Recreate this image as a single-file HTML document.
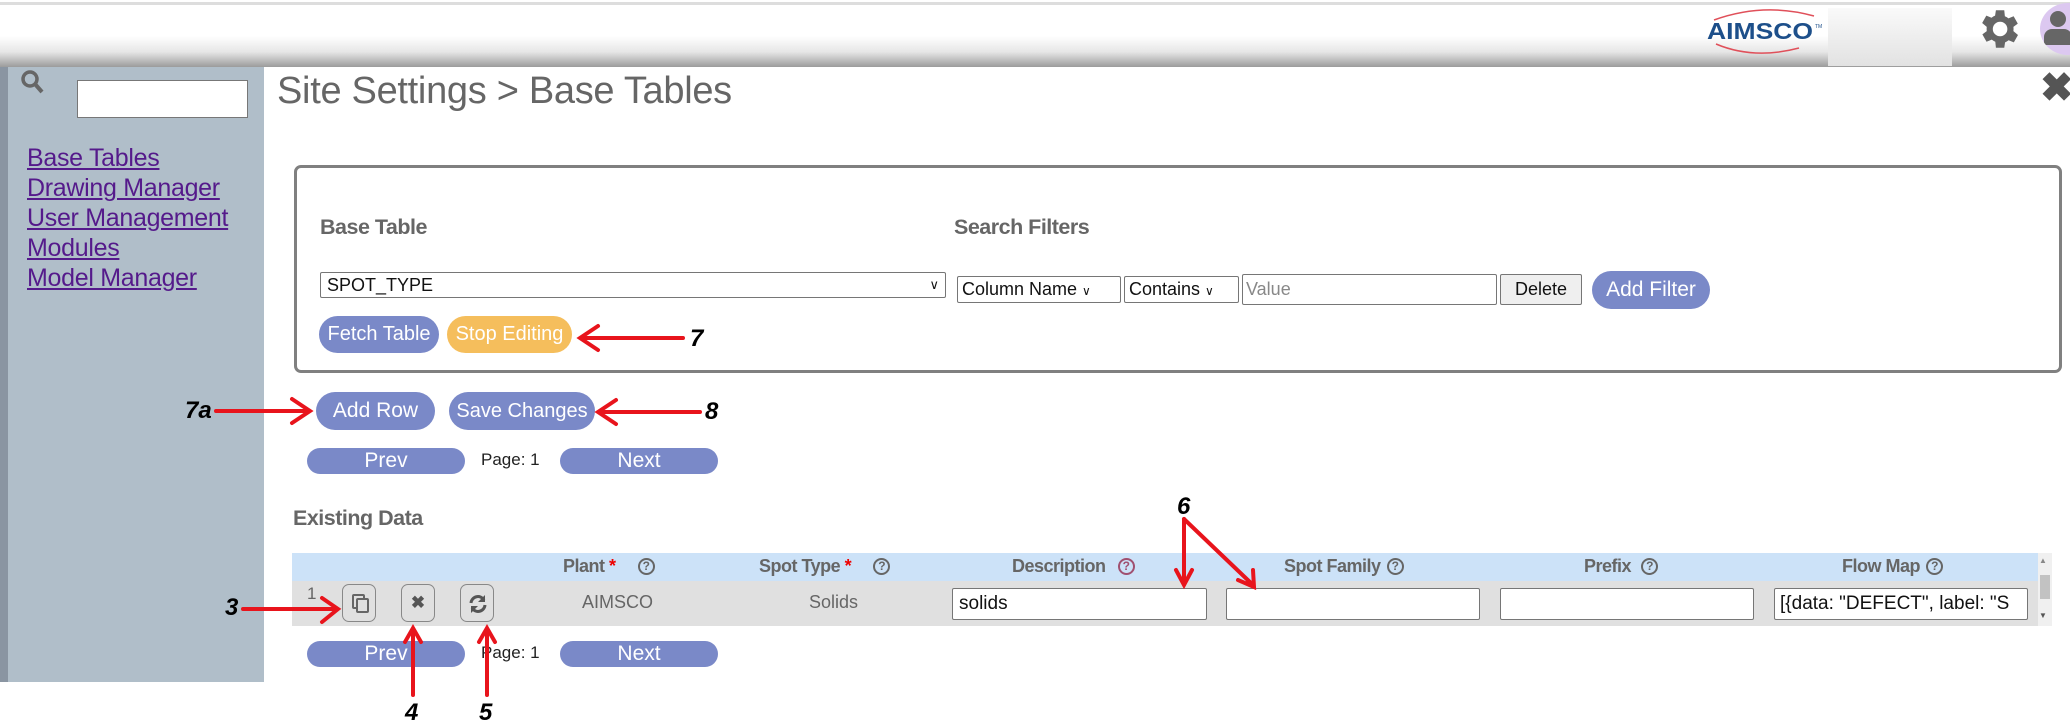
<!DOCTYPE html>
<html><head><meta charset="utf-8"><style>
*{margin:0;padding:0;box-sizing:border-box}
body{width:2070px;height:728px;overflow:hidden;background:#fff;font-family:"Liberation Sans",sans-serif;position:relative}
.a{position:absolute}
.btn{position:absolute;background:#7a89c8;color:#fff;border-radius:20px;font-size:20px;text-align:center;white-space:nowrap}
.lnk{position:absolute;left:27px;color:#551a8b;text-decoration:underline;font-size:25px;letter-spacing:-0.3px}
.lbl{position:absolute;font-weight:bold;color:#666;font-size:21.5px;letter-spacing:-0.5px}
.inp{position:absolute;background:#fff;border:1px solid #767676;border-radius:2px;font-size:19px;color:#111;padding-left:6px;white-space:nowrap;overflow:hidden}
.th{position:absolute;top:556px;font-weight:bold;color:#666;font-size:18px;letter-spacing:-0.5px;white-space:nowrap}
.q{display:inline-block;width:17px;height:17px;border:2px solid #666;border-radius:50%;font-size:12px;line-height:13px;text-align:center;vertical-align:2px;margin-left:6px;color:#666}
.st{color:#e00}
.ib{position:absolute;top:584px;width:34px;height:38px;border:1px solid #888;border-radius:7px}
.rn{position:absolute;font-weight:bold;font-style:italic;font-size:24px;color:#000}
</style></head><body>
<!-- header -->
<div class="a" style="left:0;top:0;width:2070px;height:67px;background:linear-gradient(#fff 0,#fff 36px,#e6e6e6 52px,#9c9c9c 67px)"></div>
<div class="a" style="left:0;top:2px;width:2070px;height:3px;background:#ddd"></div>
<div class="a" style="left:1828px;top:8px;width:124px;height:58px;background:linear-gradient(#fafafa,#e2e2e2)"></div>
<svg class="a" style="left:1704px;top:6px" width="124" height="50" viewBox="0 0 124 50">
<path d="M10 14 Q60 -4 110 10" stroke="#e0505a" stroke-width="1.5" fill="none"/>
<path d="M12 38 Q50 54 95 42" stroke="#e0505a" stroke-width="1.5" fill="none"/>
<text x="3" y="33" font-family="Liberation Sans" font-weight="bold" font-size="23" fill="#1d4f8a" textLength="106" lengthAdjust="spacingAndGlyphs">AIMSCO</text>
<text x="111" y="22" font-size="5" fill="#1d4f8a">TM</text></svg>
<svg class="a" style="left:1972px;top:4px" width="52" height="50" viewBox="0 0 24 24"><path fill="#666" d="M19.4 13a7.5 7.5 0 000-2l2.1-1.6-2-3.5-2.5 1a7.6 7.6 0 00-1.7-1L15 3h-4l-.4 2.6a7.6 7.6 0 00-1.7 1l-2.5-1-2 3.5L6.6 11a7.5 7.5 0 000 2l-2.1 1.6 2 3.5 2.5-1a7.6 7.6 0 001.7 1L11 21h4l.4-2.6a7.6 7.6 0 001.7-1l2.5 1 2-3.5zM13 15.5a3.5 3.5 0 110-7 3.5 3.5 0 010 7z"/></svg>
<div class="a" style="left:2040px;top:3px;width:56px;height:52px;border-radius:50%;background:#dcc8f0;overflow:hidden"><div class="a" style="left:10px;top:8px;width:16px;height:16px;border-radius:50%;background:#666"></div><div class="a" style="left:4px;top:26px;width:28px;height:16px;border-radius:8px 8px 2px 2px;background:#666"></div></div>
<!-- close X -->
<div class="a" style="left:2040px;top:68px;font-size:40px;font-weight:bold;color:#555;line-height:40px">✖</div>
<!-- sidebar -->
<div class="a" style="left:0;top:67px;width:8px;height:615px;background:#8a95a2"></div>
<div class="a" style="left:8px;top:67px;width:256px;height:615px;background:#b0bec9"></div>
<svg class="a" style="left:20px;top:70px" width="26" height="24" viewBox="0 0 26 24"><circle cx="10" cy="9" r="7" stroke="#666" stroke-width="3.5" fill="none"/><path d="M15 14 L22 22" stroke="#666" stroke-width="4"/></svg>
<div class="a" style="left:77px;top:80px;width:171px;height:38px;background:#fff;border:1px solid #777"></div>
<div class="lnk" style="top:144px">Base Tables</div>
<div class="lnk" style="top:174px">Drawing Manager</div>
<div class="lnk" style="top:204px">User Management</div>
<div class="lnk" style="top:234px">Modules</div>
<div class="lnk" style="top:264px">Model Manager</div>
<!-- title -->
<div class="a" style="left:277px;top:70px;font-size:38px;color:#666;letter-spacing:-0.3px">Site Settings &gt; Base Tables</div>
<!-- box -->
<div class="a" style="left:294px;top:165px;width:1768px;height:208px;border:3px solid #808080;border-radius:7px"></div>
<div class="lbl" style="left:320px;top:215px">Base Table</div>
<div class="lbl" style="left:954px;top:215px">Search Filters</div>
<div class="inp" style="left:320px;top:272px;width:626px;height:26px;line-height:24px;font-size:18px">SPOT_TYPE<span style="position:absolute;right:6px;font-size:13px">&#8744;</span></div>
<div class="inp" style="left:957px;top:276px;width:164px;height:27px;line-height:25px;font-size:18px;padding-left:4px">Column Name <span style="font-size:12px">&#8744;</span></div>
<div class="inp" style="left:1124px;top:276px;width:115px;height:27px;line-height:25px;font-size:18px;padding-left:4px">Contains <span style="font-size:12px">&#8744;</span></div>
<div class="inp" style="left:1242px;top:274px;width:255px;height:31px;line-height:29px;color:#888;font-size:18px;padding-left:3px">Value</div>
<div class="inp" style="left:1500px;top:274px;width:82px;height:31px;line-height:29px;background:#efefef;text-align:center;padding:0;font-size:18px">Delete</div>
<div class="btn" style="left:1592px;top:271px;width:118px;height:38px;line-height:38px;font-size:21px">Add Filter</div>
<div class="btn" style="left:319px;top:316px;width:120px;height:37px;line-height:37px;font-size:20px">Fetch Table</div>
<div class="btn" style="left:447px;top:316px;width:125px;height:37px;line-height:37px;font-size:20px;background:#f5be5c">Stop Editing</div>
<!-- buttons -->
<div class="btn" style="left:316px;top:392px;width:119px;height:38px;line-height:38px;font-size:21px">Add Row</div>
<div class="btn" style="left:449px;top:392px;width:146px;height:38px;line-height:38px;font-size:20px">Save Changes</div>
<div class="btn" style="left:307px;top:448px;width:158px;height:26px;line-height:26px;font-size:21px">Prev</div>
<div class="a" style="left:481px;top:450px;font-size:17px;color:#222">Page: 1</div>
<div class="btn" style="left:560px;top:448px;width:158px;height:26px;line-height:26px;font-size:21px">Next</div>
<div class="lbl" style="left:293px;top:506px">Existing Data</div>
<!-- table -->
<div class="a" style="left:292px;top:553px;width:1746px;height:28px;background:#cce2f8"></div>
<div class="a" style="left:292px;top:581px;width:1746px;height:45px;background:#e0e0e0"></div>
<div class="a" style="left:2038px;top:553px;width:14px;height:73px;background:#f0f0f0"></div>
<div class="a" style="left:2040px;top:575px;width:10px;height:24px;background:#c2c2c2"></div>
<div class="a" style="left:2039px;top:556px;font-size:8px;color:#888">▲</div>
<div class="a" style="left:2039px;top:611px;font-size:8px;color:#555">▼</div>
<div class="th" style="left:563px">Plant <span class="st">*</span><span class="q" style="margin-left:22px">?</span></div>
<div class="th" style="left:759px">Spot Type <span class="st">*</span><span class="q" style="margin-left:22px">?</span></div>
<div class="th" style="left:1012px">Description<span class="q" style="border-color:#a05070;color:#a05070;margin-left:12px">?</span></div>
<div class="th" style="left:1284px">Spot Family<span class="q">?</span></div>
<div class="th" style="left:1584px">Prefix<span class="q" style="margin-left:10px">?</span></div>
<div class="th" style="left:1842px">Flow Map<span class="q">?</span></div>
<div class="a" style="left:307px;top:584px;font-size:17px;color:#666">1</div>
<div class="ib" style="left:342px"><div class="a" style="left:9px;top:9px;width:13px;height:15px;border:2px solid #666;border-radius:2px"></div><div class="a" style="left:13px;top:13px;width:13px;height:15px;border:2px solid #666;border-radius:2px;background:#e0e0e0"></div></div>
<div class="ib" style="left:401px;text-align:center;line-height:36px;font-size:17px;font-weight:bold;color:#555">✖</div>
<div class="ib" style="left:460px"><svg class="a" style="left:7px;top:9px" width="20" height="20" viewBox="0 0 20 20"><path d="M3 9A7 7 0 0 1 16 6" stroke="#555" stroke-width="3" fill="none"/><path d="M17 1v7h-7z" fill="#555"/><path d="M17 11A7 7 0 0 1 4 14" stroke="#555" stroke-width="3" fill="none"/><path d="M3 19v-7h7z" fill="#555"/></svg></div>
<div class="a" style="left:582px;top:592px;font-size:18px;color:#666">AIMSCO</div>
<div class="a" style="left:809px;top:592px;font-size:18px;color:#666">Solids</div>
<div class="inp" style="left:952px;top:588px;width:255px;height:32px;line-height:30px">solids</div>
<div class="inp" style="left:1226px;top:588px;width:254px;height:32px"></div>
<div class="inp" style="left:1500px;top:588px;width:254px;height:32px"></div>
<div class="inp" style="left:1774px;top:588px;width:254px;height:32px;line-height:30px;padding-left:5px">[{data: "DEFECT", label: "S</div>
<div class="btn" style="left:307px;top:641px;width:158px;height:26px;line-height:26px;font-size:21px">Prev</div>
<div class="a" style="left:481px;top:643px;font-size:17px;color:#222">Page: 1</div>
<div class="btn" style="left:560px;top:641px;width:158px;height:26px;line-height:26px;font-size:21px">Next</div>
<!-- annotations -->
<svg class="a" style="left:0;top:0" width="2070" height="728" viewBox="0 0 2070 728" fill="none" stroke="#e8141c" stroke-width="4" stroke-linecap="round">
<path d="M683 338H582M598 326L580 338L598 350"/>
<path d="M216 411H308M292 399L310 411L292 423"/>
<path d="M700 412H600M616 400L598 412L616 424"/>
<path d="M243 609H336M322 598L338 609L322 622"/>
<path d="M413 695V630M405 642L413 628L421 642"/>
<path d="M487 695V630M479 642L487 628L495 642"/>
<path d="M1184 519V583M1176 570L1184 585L1192 570"/>
<path d="M1184 519L1253 585M1238 580L1254 587L1253 570"/>
</svg>
<div class="rn" style="left:690px;top:325px">7</div>
<div class="rn" style="left:185px;top:397px">7a</div>
<div class="rn" style="left:705px;top:398px">8</div>
<div class="rn" style="left:225px;top:594px">3</div>
<div class="rn" style="left:405px;top:699px">4</div>
<div class="rn" style="left:479px;top:699px">5</div>
<div class="rn" style="left:1177px;top:493px">6</div>
</body></html>
